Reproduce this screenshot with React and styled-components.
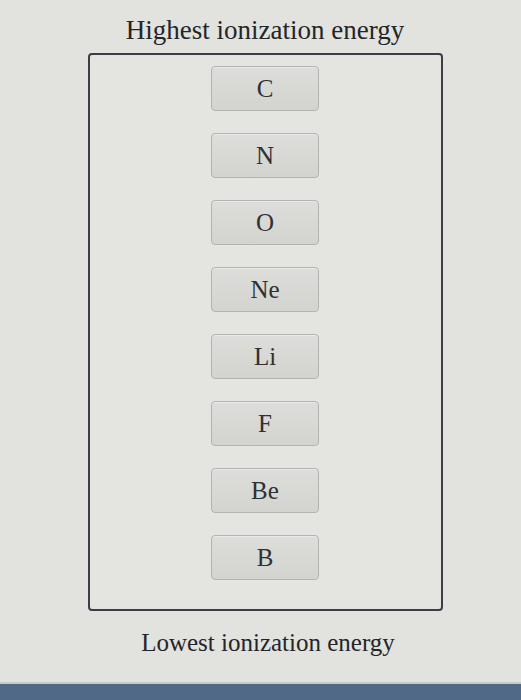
import * as React from 'react';
import styled, { createGlobalStyle } from 'styled-components'

const elements = ['C', 'N', 'O', 'Ne', 'Li', 'F', 'Be', 'B'];

const GlobalStyle = createGlobalStyle`
  html, body {
    margin: 0;
    padding: 0;
    background: #e2e2de;
  }
`

const RankList = () => {
  return (
    <Page>
      <GlobalStyle />
      <Content>
        <Label>Highest ionization energy</Label>
        <DropZone>
          {elements.map((el) => (
            <Tile key={el}>{el}</Tile>
          ))}
        </DropZone>
        <Label $bottom>Lowest ionization energy</Label>
      </Content>
      <Dock />
    </Page>
  );
};

// page layout
const Page = styled.div`
  min-height: 100vh;
  display: flex;
  flex-direction: column;
  font-family: 'Liberation Serif', 'Times New Roman', serif;
  color: #2f3033;
`
const Content = styled.div`
  display: flex;
  flex-direction: column;
  align-items: center;
  padding: 15px 0 0 9px;
`
const Label = styled.div`
  font-size: ${(p) => (p.$bottom ? '25px' : '27px')};
  line-height: ${(p) => (p.$bottom ? '28px' : '30px')};
  margin-top: ${(p) => (p.$bottom ? '18px' : '0')};
  margin-left: ${(p) => (p.$bottom ? '6px' : '0')};
  color: #242529;
`
const DropZone = styled.div`
  margin-top: 8px;
  width: 351px;
  border: 2px solid #3a3e46;
  border-radius: 4px;
  background: #e4e4e0;
  display: flex;
  flex-direction: column;
  align-items: center;
  gap: 22px;
  padding-top: 11px;
  box-sizing: content-box;
  height: 518px;
  padding-bottom: 25px;
`
const Tile = styled.div`
  width: 106px;
  height: 43px;
  display: flex;
  align-items: center;
  justify-content: center;
  border: 1px solid #b3b3b0;
  border-radius: 4px;
  background: linear-gradient(#dddddb, #d3d3cf);
  font-size: 25px;
  color: #2f3034;
  box-shadow: inset 0 1px 0 rgba(255, 255, 255, 0.35);
`
const Dock = styled.div`
  margin-top: auto;
  height: 16px;
  border-top: 2px solid #c5c9cd;
  background: #4f6987;
`

export default RankList;
